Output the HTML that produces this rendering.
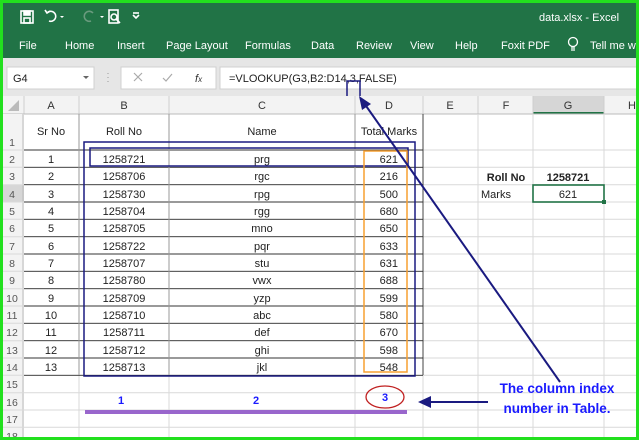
<!DOCTYPE html>
<html><head><meta charset="utf-8"><style>
html,body{margin:0;padding:0;width:639px;height:440px;overflow:hidden;background:#fff}
svg text{font-family:"Liberation Sans",sans-serif}
</style></head><body>
<svg width="639" height="440" viewBox="0 0 639 440" xmlns="http://www.w3.org/2000/svg">
<rect width="639" height="440" fill="#fff"/>
<!-- title/ribbon -->
<rect x="0" y="0" width="639" height="58" fill="#217346"/>
<g fill="none" stroke="#fff" stroke-width="1.6">
<rect x="21" y="11" width="12" height="12"/><rect x="24" y="11" width="6" height="4" fill="#fff"/><rect x="24" y="18" width="6" height="5"/>
<path d="M47 13 a5 5 0 1 1 2 8"/><path d="M45 10 l2 3 3 -2"/>
<path d="M93 13 a5 5 0 1 0 -2 8" stroke="#6a9a7e"/>
<rect x="109" y="10" width="9" height="13"/><circle cx="114" cy="17" r="3"/><path d="M116 19 l4 4"/>
<path d="M133 15 l3 3 3 -3"/><path d="M133 13 h6"/>
</g>
<path d="M60 16 l2 2 2 -2z M100 16 l2 2 2 -2z" fill="#fff"/>
<text x="579" y="21" font-size="11" fill="#fff" text-anchor="middle">data.xlsx  -  Excel</text>
<g font-size="11" fill="#fff">
<text x="19" y="49">File</text><text x="65" y="49">Home</text><text x="117" y="49">Insert</text>
<text x="166" y="49">Page Layout</text><text x="245" y="49">Formulas</text><text x="311" y="49">Data</text>
<text x="356" y="49">Review</text><text x="410" y="49">View</text><text x="455" y="49">Help</text>
<text x="501" y="49">Foxit PDF</text><text x="590" y="49">Tell me wh</text>
</g>
<g fill="none" stroke="#fff" stroke-width="1.3"><circle cx="573" cy="42" r="4.5"/><path d="M571 48 h4 M571 50 h4"/></g>
<!-- formula bar area -->
<rect x="0" y="58" width="639" height="38" fill="#e6e6e6"/>
<rect x="7" y="67" width="87" height="22" fill="#fff" stroke="#d0d0d0"/>
<text x="13" y="82" font-size="11" fill="#222">G4</text>
<path d="M83 76 l3 3 3 -3z" fill="#666"/>
<path d="M108 73 v1 M108 77 v1 M108 81 v1" stroke="#999"/>
<rect x="121" y="67" width="95" height="22" fill="#fff" stroke="#d0d0d0"/>
<path d="M134 73 l8 8 M142 73 l-8 8" stroke="#aaa" stroke-width="1.2"/>
<path d="M163 78 l3 3 6 -7" stroke="#aaa" stroke-width="1.2" fill="none"/>
<text x="195" y="82" font-size="11" font-style="italic" font-family="Liberation Serif" fill="#333">f<tspan font-size="8">x</tspan></text>
<rect x="220" y="67" width="419" height="22" fill="#fff" stroke="#d0d0d0"/>
<text x="229" y="82" font-size="11" fill="#222">=VLOOKUP(G3,B2:D14,3,FALSE)</text>
<rect x="347" y="81" width="13" height="16" fill="none" stroke="#1a1a80" stroke-width="1.5"/>
<!-- column headers -->
<rect x="0" y="96" width="639" height="18" fill="#f3f3f3"/>
<rect x="533" y="96" width="71" height="18" fill="#d6d6d6"/>
<rect x="533" y="112" width="71" height="2" fill="#217346"/>
<path d="M8 111 l11 -11 v11z" fill="#bbb"/>
<g font-size="11" fill="#333" text-anchor="middle">
<text x="51" y="109">A</text><text x="124" y="109">B</text><text x="262" y="109">C</text><text x="389" y="109">D</text>
<text x="450" y="109">E</text><text x="506" y="109">F</text><text x="568" y="109">G</text><text x="632" y="109">H</text>
</g>
<g stroke="#cfcfcf"><path d="M24 96v18 M79 96v18 M169 96v18 M355 96v18 M423 96v18 M478 96v18 M533 96v18 M604 96v18"/></g>
<path d="M0 114 h639" stroke="#bbb"/>
<!-- row header column -->
<rect x="0" y="114" width="24" height="326" fill="#f3f3f3"/>
<rect x="0" y="184.7" width="24" height="17.3" fill="#d6d6d6"/>
<path d="M23 114 v326" stroke="#bbb"/>
<!-- grid -->
<g stroke="#d9d9d9">
<path d="M79 114v326 M169 114v326 M355 114v326 M423 114v326 M478 114v326 M533 114v326 M604 114v326"/>
<path d="M0 150h639 M0 167.3h639 M0 184.7h639 M0 202h639 M0 219.3h639 M0 236.7h639 M0 254h639 M0 271.3h639 M0 288.7h639 M0 306h639 M0 323.3h639 M0 340.7h639 M0 358h639 M0 375.3h639 M0 392.7h639 M0 410h639 M0 427.3h639"/>
</g>
<!-- table darker borders -->
<g stroke="#333" stroke-width="0.9">
<path d="M24 150h399 M24 167.3h399 M24 184.7h399 M24 202h399 M24 219.3h399 M24 236.7h399 M24 254h399 M24 271.3h399 M24 288.7h399 M24 306h399 M24 323.3h399 M24 340.7h399 M24 358h399 M24 375.3h399"/>
<path d="M423 114v261"/>
</g>
<g stroke="#999"><path d="M79 114v261 M169 114v261 M355 114v261"/></g>
<g font-size="10.5" fill="#555" text-anchor="middle">
<text x="12" y="146">1</text><text x="12" y="163">2</text><text x="12" y="180">3</text><text x="12" y="198">4</text><text x="12" y="215">5</text><text x="12" y="232">6</text><text x="12" y="250">7</text><text x="12" y="267">8</text><text x="12" y="284">9</text><text x="12" y="302">10</text><text x="12" y="319">11</text><text x="12" y="336">12</text><text x="12" y="354">13</text><text x="12" y="371">14</text><text x="12" y="388">15</text><text x="12" y="406">16</text><text x="12" y="423">17</text><text x="12" y="440">18</text>
</g>
<g font-size="11" fill="#222" text-anchor="middle">
<text x="51" y="135">Sr No</text><text x="124" y="135">Roll No</text><text x="262" y="135">Name</text><text x="389" y="135">Total Marks</text>
</g>
<g font-size="11" fill="#222">
<g text-anchor="middle">
<text x="51" y="163">1</text><text x="51" y="180">2</text><text x="51" y="198">3</text><text x="51" y="215">4</text><text x="51" y="232">5</text><text x="51" y="250">6</text><text x="51" y="267">7</text><text x="51" y="284">8</text><text x="51" y="302">9</text><text x="51" y="319">10</text><text x="51" y="336">11</text><text x="51" y="354">12</text><text x="51" y="371">13</text>
<text x="124" y="163">1258721</text><text x="124" y="180">1258706</text><text x="124" y="198">1258730</text><text x="124" y="215">1258704</text><text x="124" y="232">1258705</text><text x="124" y="250">1258722</text><text x="124" y="267">1258707</text><text x="124" y="284">1258780</text><text x="124" y="302">1258709</text><text x="124" y="319">1258710</text><text x="124" y="336">1258711</text><text x="124" y="354">1258712</text><text x="124" y="371">1258713</text>
<text x="262" y="163">prg</text><text x="262" y="180">rgc</text><text x="262" y="198">rpg</text><text x="262" y="215">rgg</text><text x="262" y="232">mno</text><text x="262" y="250">pqr</text><text x="262" y="267">stu</text><text x="262" y="284">vwx</text><text x="262" y="302">yzp</text><text x="262" y="319">abc</text><text x="262" y="336">def</text><text x="262" y="354">ghi</text><text x="262" y="371">jkl</text>
</g>
<g text-anchor="end">
<text x="398" y="163">621</text><text x="398" y="180">216</text><text x="398" y="198">500</text><text x="398" y="215">680</text><text x="398" y="232">650</text><text x="398" y="250">633</text><text x="398" y="267">631</text><text x="398" y="284">688</text><text x="398" y="302">599</text><text x="398" y="319">580</text><text x="398" y="336">670</text><text x="398" y="354">598</text><text x="398" y="371">548</text>
</g>
<text x="506" y="181" text-anchor="middle" font-weight="bold">Roll No</text>
<text x="568" y="181" text-anchor="middle" font-weight="bold">1258721</text>
<text x="481" y="198">Marks</text>
<text x="568" y="198" text-anchor="middle">621</text>
</g>
<rect x="533" y="185" width="71" height="17" fill="none" stroke="#217346" stroke-width="1.6"/>
<rect x="602" y="200" width="4" height="4" fill="#217346"/>
<!-- annotations -->
<rect x="84" y="142" width="331" height="234" fill="none" stroke="#1a1a80" stroke-width="1.5"/>
<rect x="90" y="148" width="318" height="18" fill="none" stroke="#1a1a80" stroke-width="1.5"/>
<rect x="364" y="151" width="43" height="221" fill="none" stroke="#f7a030" stroke-width="1.5"/>
<path d="M560 382 L364 103" stroke="#1a1a80" stroke-width="2"/>
<path d="M359 96 L362 110 L371 104 Z" fill="#1a1a80"/>
<path d="M488 402 H428" stroke="#1a1a80" stroke-width="2"/>
<path d="M418 402 L431 396 L431 408 Z" fill="#1a1a80"/>
<path d="M85 412 H407" stroke="#9966cc" stroke-width="4"/>
<ellipse cx="385" cy="397" rx="19" ry="11" fill="none" stroke="#c02020" stroke-width="1.3"/>
<g font-size="11" font-weight="bold" fill="#1a1aff" text-anchor="middle">
<text x="121" y="404">1</text><text x="256" y="404">2</text><text x="385" y="401">3</text>
</g>
<g font-size="13.5" font-weight="bold" fill="#1a1aff" text-anchor="middle">
<text x="557" y="393">The column index</text><text x="557" y="413">number in Table.</text>
</g>
<!-- green frame -->
<rect x="1.5" y="1.5" width="636" height="437" fill="none" stroke="#22e01e" stroke-width="3"/>
</svg>
</body></html>
